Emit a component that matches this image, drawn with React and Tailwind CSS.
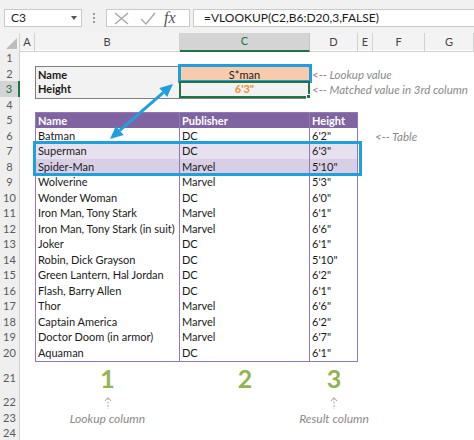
import React from 'react';

const cols = 'grid grid-cols-[20px_15px_145px_130px_48px_15px_52px_49px]';
const tb = 'border-[#8f7ab8]';

const rows = [
  ['Batman', 'DC', `6'2"`],
  ['Superman', 'DC', `6'3"`],
  ['Spider-Man', 'Marvel', `5'10"`],
  ['Wolverine', 'Marvel', `5'3"`],
  ['Wonder Woman', 'DC', `6'0"`],
  ['Iron Man, Tony Stark', 'Marvel', `6'1"`],
  ['Iron Man, Tony Stark (in suit)', 'Marvel', `6'6"`],
  ['Joker', 'DC', `6'1"`],
  ['Robin, Dick Grayson', 'DC', `5'10"`],
  ['Green Lantern, Hal Jordan', 'DC', `6'2"`],
  ['Flash, Barry Allen', 'DC', `6'1"`],
  ['Thor', 'Marvel', `6'6"`],
  ['Captain America', 'Marvel', `6'2"`],
  ['Doctor Doom (in armor)', 'Marvel', `6'7"`],
  ['Aquaman', 'DC', `6'1"`],
];

function Row({ n, h = 'h-[15.5px]', sel, children }) {
  return (
    <div className={`${cols} ${h}`}>
      <div
        className={`flex items-center justify-center border-b text-[11px] ${
          sel
            ? 'bg-[#d4d4d4] text-[#217346] border-r-2 border-r-[#217346] border-b-[#c6c6c6]'
            : 'bg-[#efefef] text-[#5a5a5a] border-r border-r-[#cfcfcf] border-b-[#dedede]'
        }`}
      >
        {n}
      </div>
      {children}
    </div>
  );
}

function Note({ children }) {
  return (
    <div className="flex items-center whitespace-nowrap pl-[2px] text-[11.5px] italic text-[#8a8a8a]">
      {children}
    </div>
  );
}

function UpArrow() {
  return (
    <svg width="8" height="14" viewBox="0 0 8 14">
      <path d="M1 5 L4 1.5 L7 5" fill="none" stroke="#a6a6a6" strokeWidth="1" />
      <path d="M4 2 L4 13" stroke="#a6a6a6" strokeWidth="1" strokeDasharray="2 1.5" />
    </svg>
  );
}

export default function App() {
  const cell = `flex items-center px-[2px] border-b border-r ${tb} whitespace-nowrap overflow-hidden`;
  return (
    <div className="relative w-[474px] h-[440px] overflow-hidden bg-white font-['Lato',sans-serif] text-[11px] text-[#1a1a1a]">
      {/* formula bar */}
      <div className="flex h-[33px] items-start bg-[#f1f1f1] pt-[9px] pl-[4px]">
        <div className="flex h-[18px] w-[78px] items-center justify-between border border-[#c9c9c9] bg-white pl-[6px] pr-[4px] text-[12px]">
          <span>C3</span>
          <svg width="6" height="4" viewBox="0 0 6 4"><path d="M0 0 L6 0 L3 4 Z" fill="#555" /></svg>
        </div>
        <div className="flex h-[18px] w-[24px] flex-col items-center justify-center gap-[2px]">
          <div className="h-[2px] w-[2px] bg-[#9a9a9a]" />
          <div className="h-[2px] w-[2px] bg-[#9a9a9a]" />
          <div className="h-[2px] w-[2px] bg-[#9a9a9a]" />
        </div>
        <div className="flex h-[18px] w-[84px] items-center border border-[#c9c9c9] bg-white pl-[7px]">
          <svg width="15" height="13" viewBox="0 0 15 13">
            <path d="M1 1 L14 12 M14 1 L1 12" stroke="#a8a8a8" strokeWidth="1.4" />
          </svg>
          <svg className="ml-[11px]" width="16" height="13" viewBox="0 0 16 13">
            <path d="M1 7 L6 12 L15 1" fill="none" stroke="#a8a8a8" strokeWidth="1.4" />
          </svg>
          <span className="ml-[8px] font-['Liberation_Serif',serif] text-[16px] italic leading-none text-[#555]">fx</span>
        </div>
        <div className="ml-[3px] flex h-[18px] flex-1 items-center border border-r-0 border-[#c9c9c9] bg-white pl-[10px] text-[12px]">
          =VLOOKUP(C2,B6:D20,3,FALSE)
        </div>
      </div>

      {/* column headers */}
      <div className={`${cols} h-[17px] bg-[#f3f3f3] text-[11px] text-[#444]`}>
        <div className="flex items-end justify-end border-r border-b border-[#d2d2d2] p-[2px]">
          <svg width="11" height="11" viewBox="0 0 11 11"><path d="M11 0 L11 11 L0 11 Z" fill="#bdbdbd" /></svg>
        </div>
        {['A', 'B', 'C', 'D', 'E', 'F', 'G'].map((c) => (
          <div
            key={c}
            className={`flex items-center justify-center border-r ${
              c === 'C'
                ? 'bg-[#d4d4d4] text-[#217346] border-b-2 border-b-[#217346] border-r-[#c6c6c6]'
                : 'border-b border-[#d2d2d2]'
            }`}
          >
            {c}
          </div>
        ))}
      </div>

      {/* rows */}
      <Row n="1"><div /><div /><div /><div /><div /><div /><div /></Row>
      <Row n="2">
        <div />
        <div className="flex items-center border border-[#7f7f7f] bg-[#f2f2f2] px-[2px] font-bold">Name</div>
        <div className="flex items-center justify-center border-y border-r border-[#7f7f7f] bg-[#f8cbad]">S*man</div>
        <Note>&lt;-- Lookup value</Note>
        <div /><div /><div />
      </Row>
      <Row n="3" sel>
        <div />
        <div className="flex items-center border-x border-b border-[#7f7f7f] bg-[#f2f2f2] px-[2px] font-bold">Height</div>
        <div className="flex items-center justify-center border-r border-b border-[#7f7f7f] bg-[#f2f2f2] font-bold text-[#ed8f2f]">{`6'3"`}</div>
        <Note>&lt;-- Matched value in 3rd column</Note>
        <div /><div /><div />
      </Row>
      <Row n="4"><div /><div /><div /><div /><div /><div /><div /></Row>
      <Row n="5">
        <div />
        <div className={`${cell} border-l border-t bg-[#8064a2] font-bold text-white`}>Name</div>
        <div className={`${cell} border-t bg-[#8064a2] font-bold text-white`}>Publisher</div>
        <div className={`${cell} border-t bg-[#8064a2] font-bold text-white`}>Height</div>
        <div /><div /><div />
      </Row>
      {rows.map(([name, pub, ht], i) => {
        const bg = i === 1 ? 'bg-[#e6e0ef]' : i === 2 ? 'bg-[#d8cfe7]' : 'bg-white';
        return (
          <Row key={name} n={String(i + 6)}>
            <div />
            <div className={`${cell} ${bg} border-l`}>{name}</div>
            <div className={`${cell} ${bg}`}>{pub}</div>
            <div className={`${cell} ${bg}`}>{ht}</div>
            <div />
            {i === 0 ? <Note>&lt;-- Table</Note> : <div />}
            <div />
          </Row>
        );
      })}
      <Row n="21" h="h-[34px]">
        <div />
        <div className="flex items-center justify-center text-[25px] font-bold text-[#93b353]">1</div>
        <div className="flex items-center justify-center text-[25px] font-bold text-[#93b353]">2</div>
        <div className="flex items-center justify-center text-[25px] font-bold text-[#93b353]">3</div>
        <div /><div /><div />
      </Row>
      <Row n="22">
        <div />
        <div className="flex items-center justify-center"><UpArrow /></div>
        <div />
        <div className="flex items-center justify-center"><UpArrow /></div>
        <div /><div /><div />
      </Row>
      <Row n="23">
        <div />
        <div className="flex items-center justify-center whitespace-nowrap text-[12px] italic text-[#8a8a8a]">Lookup column</div>
        <div />
        <div className="flex items-center justify-center whitespace-nowrap text-[12px] italic text-[#8a8a8a]">Result column</div>
        <div /><div /><div />
      </Row>
      <Row n="24"><div /><div /><div /><div /><div /><div /><div /></Row>

      {/* overlays */}
      <div className="pointer-events-none absolute left-[178px] top-[64px] h-[19px] w-[134px] border-[3px] border-[#1fa0dc]" />
      <div className="pointer-events-none absolute left-[179px] top-[81px] h-[17px] w-[131px] border-2 border-[#217346]">
        <div className="absolute -bottom-[3px] -right-[3px] h-[5px] w-[5px] border border-white bg-[#217346]" />
      </div>
      <div className="pointer-events-none absolute left-[33px] top-[141px] h-[35px] w-[329px] border-[3px] border-[#1fa0dc]" />
      <svg className="pointer-events-none absolute left-0 top-0" width="474" height="440" viewBox="0 0 474 440">
        <line x1="163.2" y1="92.6" x2="119.8" y2="130.4" stroke="#1fa0dc" strokeWidth="3" />
        <path d="M173 84 L167.1 97.1 L159.3 88.1 Z" fill="#1fa0dc" />
        <path d="M110 139 L123.7 134.9 L115.9 125.9 Z" fill="#1fa0dc" />
      </svg>
    </div>
  );
}
